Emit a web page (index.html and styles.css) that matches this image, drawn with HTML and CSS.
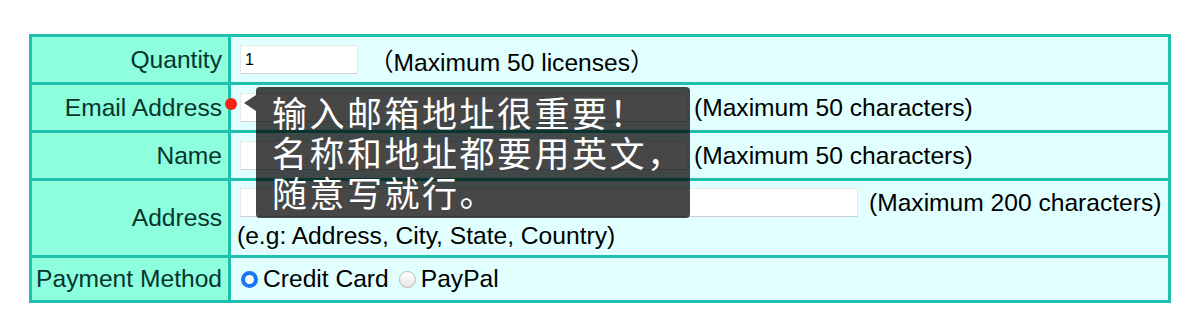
FILE: index.html
```html
<!DOCTYPE html>
<html>
<head>
<meta charset="utf-8">
<link rel="stylesheet" href="styles.css">
</head>
<body>
<div class="page">
  <div class="form">
    <div class="label">Quantity</div>
    <div class="value row1">
      <input class="inp qty" type="text" value="1">
      <span class="note note-qty">（Maximum 50 licenses）</span>
    </div>

    <div class="label">Email Address<span class="dot"></span></div>
    <div class="value tipwrap">
      <input class="inp mid" type="text">
      <span class="note">(Maximum 50 characters)</span>
      <div class="tip">
        <span class="arrow"></span>
        <div class="tiptext">输入邮箱地址很重要！<br>名称和地址都要用英文，<br>随意写就行。</div>
      </div>
    </div>

    <div class="label">Name</div>
    <div class="value">
      <input class="inp mid" type="text">
      <span class="note">(Maximum 50 characters)</span>
    </div>

    <div class="label">Address</div>
    <div class="value addr">
      <div class="addr-line">
        <input class="inp long" type="text">
        <span class="note note-addr">(Maximum 200 characters)</span>
      </div>
      <div class="hint">(e.g: Address, City, State, Country)</div>
    </div>

    <div class="label">Payment Method</div>
    <div class="value pay">
      <span class="radio checked"></span><span class="opt">Credit Card</span>
      <span class="radio"></span><span class="opt">PayPal</span>
    </div>
  </div>
</div>
</body>
</html>
```

FILE: styles.css
```css
html, body {
  margin: 0;
  padding: 0;
  background: #ffffff;
}

.page {
  padding: 34px 21px 0 29px;
  font-family: "Liberation Sans", Arial, "Noto Sans CJK SC", sans-serif;
  font-size: 24.6px;
}

.form {
  width: 1142px;
  box-sizing: border-box;
  display: grid;
  grid-template-columns: 196px 1fr;
  grid-template-rows: 45px 45px 45px 74px 42px;
  gap: 3px;
  padding: 3px;
  background: #1fbfae;
}

.label {
  position: relative;
  background: #8dffdd;
  color: #07352e;
  display: flex;
  align-items: center;
  justify-content: flex-end;
  padding-right: 6px;
  white-space: nowrap;
}

.value {
  position: relative;
  background: #e0fffe;
  color: #000;
  display: flex;
  align-items: center;
  padding-left: 6px;
  white-space: nowrap;
}

.inp {
  box-sizing: border-box;
  height: 29px;
  margin: 0 3px;
  border: 1px solid #e3eaea;
  border-bottom-color: #cdd3d3;
  background: #ffffff;
  font-family: "Liberation Sans", Arial, sans-serif;
  font-size: 16px;
  padding: 2px 4px;
  outline: none;
}

.qty { width: 118px; }
.mid { width: 448px; }
.long { width: 618px; }

.note { margin-left: 3px; }
.note-qty {
  margin-left: 8px;
}
.note-addr { margin-left: 8px; }

.addr {
  display: block;
  padding-top: 7px;
}

.addr-line {
  display: flex;
  align-items: center;
}

.hint {
  margin-top: 5px;
  line-height: 28px;
}

.pay { padding-left: 10px; }

.radio {
  flex-shrink: 0;
  box-sizing: border-box;
  width: 17px;
  height: 17px;
  border-radius: 50%;
  background: linear-gradient(#ffffff, #e6e6e6);
  border: 1px solid #b9b9b9;
  margin-right: 5px;
}

.radio.checked {
  background: #ffffff;
  border: 4.5px solid #1a77f2;
}

.opt { margin-right: 10px; }

.dot {
  position: absolute;
  right: -9px;
  top: 13px;
  width: 12px;
  height: 12px;
  border-radius: 50%;
  background: #f42218;
  z-index: 3;
}

.tip {
  position: absolute;
  left: 25px;
  top: 2px;
  width: 434px;
  height: 131px;
  box-sizing: border-box;
  background: rgba(0, 0, 0, 0.72);
  border-radius: 4px;
  z-index: 5;
  padding: 5px 16px;
}

.arrow {
  position: absolute;
  left: -12px;
  top: 8px;
  width: 0;
  height: 0;
  border-top: 8px solid transparent;
  border-bottom: 8px solid transparent;
  border-right: 12px solid rgba(0, 0, 0, 0.72);
}

.tiptext {
  color: #ffffff;
  font-family: "Noto Sans CJK SC", sans-serif;
  font-size: 35px;
  letter-spacing: 2.5px;
  line-height: 40px;
  white-space: nowrap;
}
```
